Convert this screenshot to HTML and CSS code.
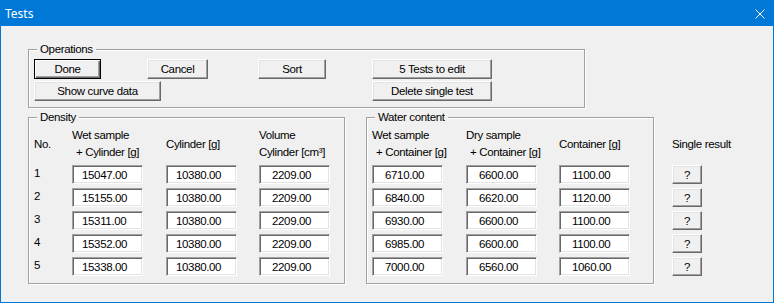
FILE: index.html
```html
<!DOCTYPE html>
<html>
<head>
<meta charset="utf-8">
<title>Tests</title>
<link rel="stylesheet" href="styles.css">
</head>
<body>
<div class="window">
  <div class="titlebar">
    <span class="title">Tests</span>
    <svg class="close" width="10" height="10" viewBox="0 0 10 10"><path d="M0.5 0.5 L9.5 9.5 M9.5 0.5 L0.5 9.5" stroke="#fff" stroke-width="1" fill="none"/></svg>
  </div>
  <div class="client">
    <div class="group ops">
      <span class="legend">Operations</span>
      <div class="btnrow">
        <button class="btn default w-done">Done</button>
        <button class="btn w-cancel">Cancel</button>
        <button class="btn w-sort">Sort</button>
        <button class="btn w-tests">5 Tests to edit</button>
      </div>
      <div class="btnrow">
        <button class="btn w-curve">Show curve data</button>
        <button class="btn w-delete">Delete single test</button>
      </div>
    </div>
    <div class="lower">
      <div class="group density">
        <span class="legend">Density</span>
        <div class="grid dgrid">
          <div class="hd">No.</div>
          <div class="hd">Wet sample<span class="ind">+ Cylinder [g]</span></div>
          <div class="hd">Cylinder [g]</div>
          <div class="hd">Volume<span class="line">Cylinder [cm³]</span></div>

          <div class="num">1</div>
          <input class="field" value="15047.00" readonly>
          <input class="field" value="10380.00" readonly>
          <input class="field s4" value="2209.00" readonly>

          <div class="num">2</div>
          <input class="field" value="15155.00" readonly>
          <input class="field" value="10380.00" readonly>
          <input class="field s4" value="2209.00" readonly>

          <div class="num">3</div>
          <input class="field" value="15311.00" readonly>
          <input class="field" value="10380.00" readonly>
          <input class="field s4" value="2209.00" readonly>

          <div class="num">4</div>
          <input class="field" value="15352.00" readonly>
          <input class="field" value="10380.00" readonly>
          <input class="field s4" value="2209.00" readonly>

          <div class="num">5</div>
          <input class="field" value="15338.00" readonly>
          <input class="field" value="10380.00" readonly>
          <input class="field s4" value="2209.00" readonly>
        </div>
      </div>
      <div class="group water">
        <span class="legend">Water content</span>
        <div class="grid wgrid">
          <div class="hd">Wet sample<span class="ind">+ Container [g]</span></div>
          <div class="hd">Dry sample<span class="ind">+ Container [g]</span></div>
          <div class="hd">Container [g]</div>

          <input class="field s4" value="6710.00" readonly>
          <input class="field s4" value="6600.00" readonly>
          <input class="field s4" value="1100.00" readonly>

          <input class="field s4" value="6840.00" readonly>
          <input class="field s4" value="6620.00" readonly>
          <input class="field s4" value="1120.00" readonly>

          <input class="field s4" value="6930.00" readonly>
          <input class="field s4" value="6600.00" readonly>
          <input class="field s4" value="1100.00" readonly>

          <input class="field s4" value="6985.00" readonly>
          <input class="field s4" value="6600.00" readonly>
          <input class="field s4" value="1100.00" readonly>

          <input class="field s4" value="7000.00" readonly>
          <input class="field s4" value="6560.00" readonly>
          <input class="field s4" value="1060.00" readonly>
        </div>
      </div>
      <div class="single">
        <div class="hd">Single result</div>
        <button class="btn q">?</button>
        <button class="btn q">?</button>
        <button class="btn q">?</button>
        <button class="btn q">?</button>
        <button class="btn q">?</button>
      </div>
    </div>
  </div>
</div>
</body>
</html>
```
FILE: styles.css
```css
body {
  margin: 0;
  background: #fff;
  font-family: "Liberation Sans", Arial, sans-serif;
  font-size: 11.5px;
  letter-spacing: -0.35px;
  color: #000;
}

.window {
  width: 774px;
  height: 303px;
  box-sizing: border-box;
  border: 1px solid #0078d7;
  background: #f0f0f0;
  display: flex;
  flex-direction: column;
}

.titlebar {
  height: 25px;
  flex: none;
  background: #0078d7;
  color: #fff;
  display: flex;
  align-items: center;
  justify-content: space-between;
  padding-left: 4px;
  font-family: "Noto Sans", "Liberation Sans", sans-serif;
  font-size: 12px;
  letter-spacing: 0;
}

.close {
  margin-right: 8px;
  display: block;
}

.client {
  padding: 23px 0 0 27px;
}

.group {
  position: relative;
  box-sizing: border-box;
  border: 1px solid #a0a0a0;
  box-shadow: inset 1px 1px 0 #fff, 1px 1px 0 #fff;
}

.legend {
  position: absolute;
  top: -8px;
  left: 8px;
  padding: 0 3px;
  background: #f0f0f0;
  line-height: 14px;
  white-space: nowrap;
}

.ops {
  width: 557px;
  height: 59px;
  padding: 9px 0 0 5px;
}

.btnrow {
  display: flex;
}

.btnrow + .btnrow {
  margin-top: 2px;
}

.btn {
  height: 20px;
  box-sizing: border-box;
  margin: 0;
  padding: 0;
  font: inherit;
  letter-spacing: inherit;
  color: #000;
  background: #f0f0f0;
  border: 1px solid;
  border-color: #fff #696969 #696969 #fff;
  box-shadow: inset -1px -1px 0 #a0a0a0, inset 1px 1px 0 #e3e3e3;
  text-align: center;
}

.btn.default {
  border-color: #000;
  box-shadow: inset 1px 1px 0 #fff, inset -1px -1px 0 #696969, inset -2px -2px 0 #a0a0a0;
}

.w-done { width: 67px; }
.w-cancel { width: 61px; margin-left: 46px; }
.w-sort { width: 68px; margin-left: 50px; }
.w-tests { width: 120px; margin-left: 46px; }
.w-curve { width: 127px; }
.w-delete { width: 120px; margin-left: 211px; }

.lower {
  display: flex;
  align-items: flex-start;
  margin-top: 9px;
}

.density {
  width: 317px;
  height: 167px;
  padding: 9px 0 0 5px;
}

.water {
  width: 288px;
  height: 167px;
  margin-left: 21px;
  padding: 9px 0 0 5px;
}

.grid,
.single {
  display: grid;
  grid-template-rows: 34px repeat(5, 19px);
  row-gap: 4px;
}

.dgrid {
  grid-template-columns: 38px 94px 93px 71px;
}

.wgrid {
  grid-template-columns: 94px 93px 71px;
}

.single {
  margin-left: 18px;
  padding-top: 10px;
  grid-template-columns: 60px;
}

.hd {
  align-self: center;
  line-height: 17px;
  white-space: nowrap;
}

.hd .ind,
.hd .line {
  display: block;
}

.hd .ind {
  padding-left: 4px;
}

.num {
  line-height: 16px;
}

.field {
  width: 71px;
  height: 19px;
  box-sizing: border-box;
  margin: 0;
  padding: 0 0 0 9px;
  font: inherit;
  letter-spacing: inherit;
  color: #000;
  background: #fff;
  border: 1px solid;
  border-color: #a0a0a0 #fff #fff #a0a0a0;
  box-shadow: inset 1px 1px 0 #696969, inset -1px -1px 0 #e3e3e3;
  outline: none;
}

.field.s4 {
  padding-left: 12px;
}

.btn.q {
  width: 30px;
  height: 19px;
}
```
